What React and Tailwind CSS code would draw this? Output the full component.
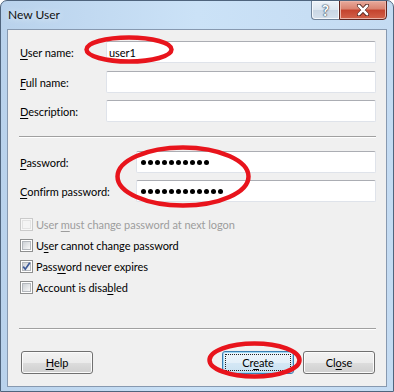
import React from "react";

const F = "font-['Segoe_UI','Lato',sans-serif]";

function U({ children }) {
  return <span className="underline underline-offset-[2px] decoration-[1px]">{children}</span>;
}

function TextBox({ children }) {
  return (
    <div className="flex-1 h-[22px] bg-white border border-[#dfe3ea] border-t-[#abadb3] rounded-[2px] flex items-center pl-[2px] text-black">
      {children}
    </div>
  );
}

function Dots({ n }) {
  return (
    <div className="flex gap-[2px] pl-[2px]">
      {Array.from({ length: n }).map((_, i) => (
        <span key={i} className="w-[5px] h-[5px] rounded-full bg-black" />
      ))}
    </div>
  );
}

function Row({ label, labelW, children, className }) {
  return (
    <div className={"flex items-center h-[22px] " + (className || "")}>
      <div className={"pl-[1px] text-black leading-[15px] " + labelW}>{label}</div>
      <TextBox>{children}</TextBox>
    </div>
  );
}

function Check({ checked, disabled, children, className }) {
  return (
    <div className={"flex items-center h-[13px] pl-[1px] " + (className || "")}>
      <div
        className={
          "w-[13px] h-[13px] border flex items-center justify-center " +
          (disabled ? "border-[#cacaca] bg-[#f7f7f7]" : "border-[#8e8f8f] bg-white")
        }
      >
        <div
          className={
            "w-[9px] h-[9px] border relative " +
            (disabled
              ? "border-[#e3e3e3] bg-[#f4f4f4]"
              : "border-[#b3b7bc] bg-gradient-to-br from-[#cdd1d6] to-[#f8f8f8]")
          }
        >
          {checked && (
            <svg className="absolute left-[-2px] top-[-2px]" width="11" height="11" viewBox="0 0 11 11">
              <path d="M2.2 5.6 L4.3 8.2 L8.8 1.8" fill="none" stroke="#3f5b98" strokeWidth="1.7" />
            </svg>
          )}
        </div>
      </div>
      <span className={"ml-[3px] leading-[15px] " + (disabled ? "text-[#9d9d9d]" : "text-black")}>{children}</span>
    </div>
  );
}

function Button({ children, focused, className }) {
  return (
    <div
      className={
        "relative w-[72px] h-[23px] rounded-[3px] border flex items-center justify-center text-black leading-[15px] " +
        (focused
          ? "border-[#3c7fb1] bg-[linear-gradient(#eef6fc_0%,#e4f0f9_50%,#d5e8f5_50%,#cae1f1_100%)] shadow-[inset_0_0_0_1px_#9fdaf7] "
          : "border-[#707070] bg-[linear-gradient(#f2f2f2_0%,#ebebeb_50%,#dddddd_50%,#cfcfcf_100%)] shadow-[inset_0_0_0_1px_#fbfbfb] ") +
        (className || "")
      }
    >
      {focused && <span className="absolute inset-[2px] border border-dotted border-[#222]" />}
      <span className="relative">{children}</span>
    </div>
  );
}

export default function App() {
  return (
    <div
      className={
        "relative w-[394px] h-[392px] rounded-t-[7px] border border-[#4f647d] bg-gradient-to-r from-[#b9d2ec] via-[#cbe2f7] to-[#c4dbf2] flex flex-col text-[11px] tracking-[-0.05px] overflow-hidden " +
        F
      }
    >
      {/* title bar */}
      <div className="h-[28px] flex items-start justify-between">
        <div className="ml-[7px] mt-[6px] text-[12px] tracking-normal leading-[15px] text-[#111] [text-shadow:0_0_6px_#eef6ff]">New User</div>
        <div className="flex mr-[6px] -mt-[1px]">
          <div className="w-[28px] h-[20px] border border-[#6f8299] border-r-0 rounded-bl-[4px] bg-[linear-gradient(#eef3f9_0%,#dde6f0_50%,#c9d6e4_50%,#d5e0ec_100%)] flex items-center justify-center shadow-[inset_0_0_0_1px_#f4f8fc]">
            <span className="text-[15px] font-bold leading-[15px] text-white [text-shadow:0_0_1px_#3a4a5e,0_0_1px_#3a4a5e,0_0_2px_#3a4a5e]">
              ?
            </span>
          </div>
          <div className="w-[48px] h-[20px] border border-[#5e2520] rounded-br-[4px] bg-[linear-gradient(#e8aa9c_0%,#d9826f_45%,#c4432d_50%,#d2624a_100%)] flex items-center justify-center shadow-[inset_0_0_0_1px_#eab4a8]">
            <svg width="16" height="12" viewBox="0 0 16 12">
              <path
                d="M4 1.5 L12 10.5 M12 1.5 L4 10.5"
                fill="none"
                stroke="#4a1f1a"
                strokeWidth="4"
                strokeLinecap="round"
              />
              <path
                d="M4 1.8 L12 10.2 M12 1.8 L4 10.2"
                fill="none"
                stroke="#ffffff"
                strokeWidth="2.6"
                strokeLinecap="round"
              />
            </svg>
          </div>
        </div>
      </div>

      {/* client area */}
      <div className="mx-[6px] h-[358px] border border-[#8799b0] bg-[#f0f0f0] flex flex-col pl-[11px] pr-[10px] pt-[11px]">
        <Row labelW="w-[87px]" label={<><U>U</U>ser name:</>}>
          <span className="leading-[15px]">user1</span>
        </Row>
        <Row labelW="w-[87px]" className="mt-[8px]" label={<><U>F</U>ull name:</>} />
        <Row labelW="w-[87px]" className="mt-[7px]" label={<><U>D</U>escription:</>} />

        <div className="mt-[14px] h-[1px] bg-[#a0a0a0]" />
        <div className="h-[1px] bg-white" />

        <Row labelW="w-[117px]" className="mt-[13px]" label={<><U>P</U>assword:</>}>
          <Dots n={10} />
        </Row>
        <Row labelW="w-[117px]" className="mt-[7px]" label={<><U>C</U>onfirm password:</>}>
          <Dots n={12} />
        </Row>

        <Check disabled className="mt-[16px]">
          User <U>m</U>ust change password at next logon
        </Check>
        <Check className="mt-[8px]">
          U<U>s</U>er cannot change password
        </Check>
        <Check checked className="mt-[8px]">
          Pass<U>w</U>ord never expires
        </Check>
        <Check className="mt-[8px]">
          Account is disa<U>b</U>led
        </Check>

        <div className="mt-[34px] h-[1px] bg-[#a0a0a0]" />
        <div className="h-[1px] bg-white" />

        <div className="mt-[21px] flex items-center">
          <Button className="ml-[2px]">
            <U>H</U>elp
          </Button>
          <div className="flex-1" />
          <Button focused>
            Cr<U>e</U>ate
          </Button>
          <Button className="ml-[9px] mr-[1px]">
            Cl<U>o</U>se
          </Button>
        </div>
      </div>

      {/* red annotation ellipses */}
      <svg className="absolute left-[-1px] top-[-1px] pointer-events-none" width="394" height="392" viewBox="0 0 394 392">
        <g fill="none" stroke="#e8141c" strokeWidth="4.5">
          <ellipse cx="129" cy="49.5" rx="42.5" ry="12" />
          <ellipse cx="183" cy="176.5" rx="65.5" ry="29" />
          <ellipse cx="254.5" cy="360" rx="45" ry="16.5" />
        </g>
      </svg>
    </div>
  );
}
